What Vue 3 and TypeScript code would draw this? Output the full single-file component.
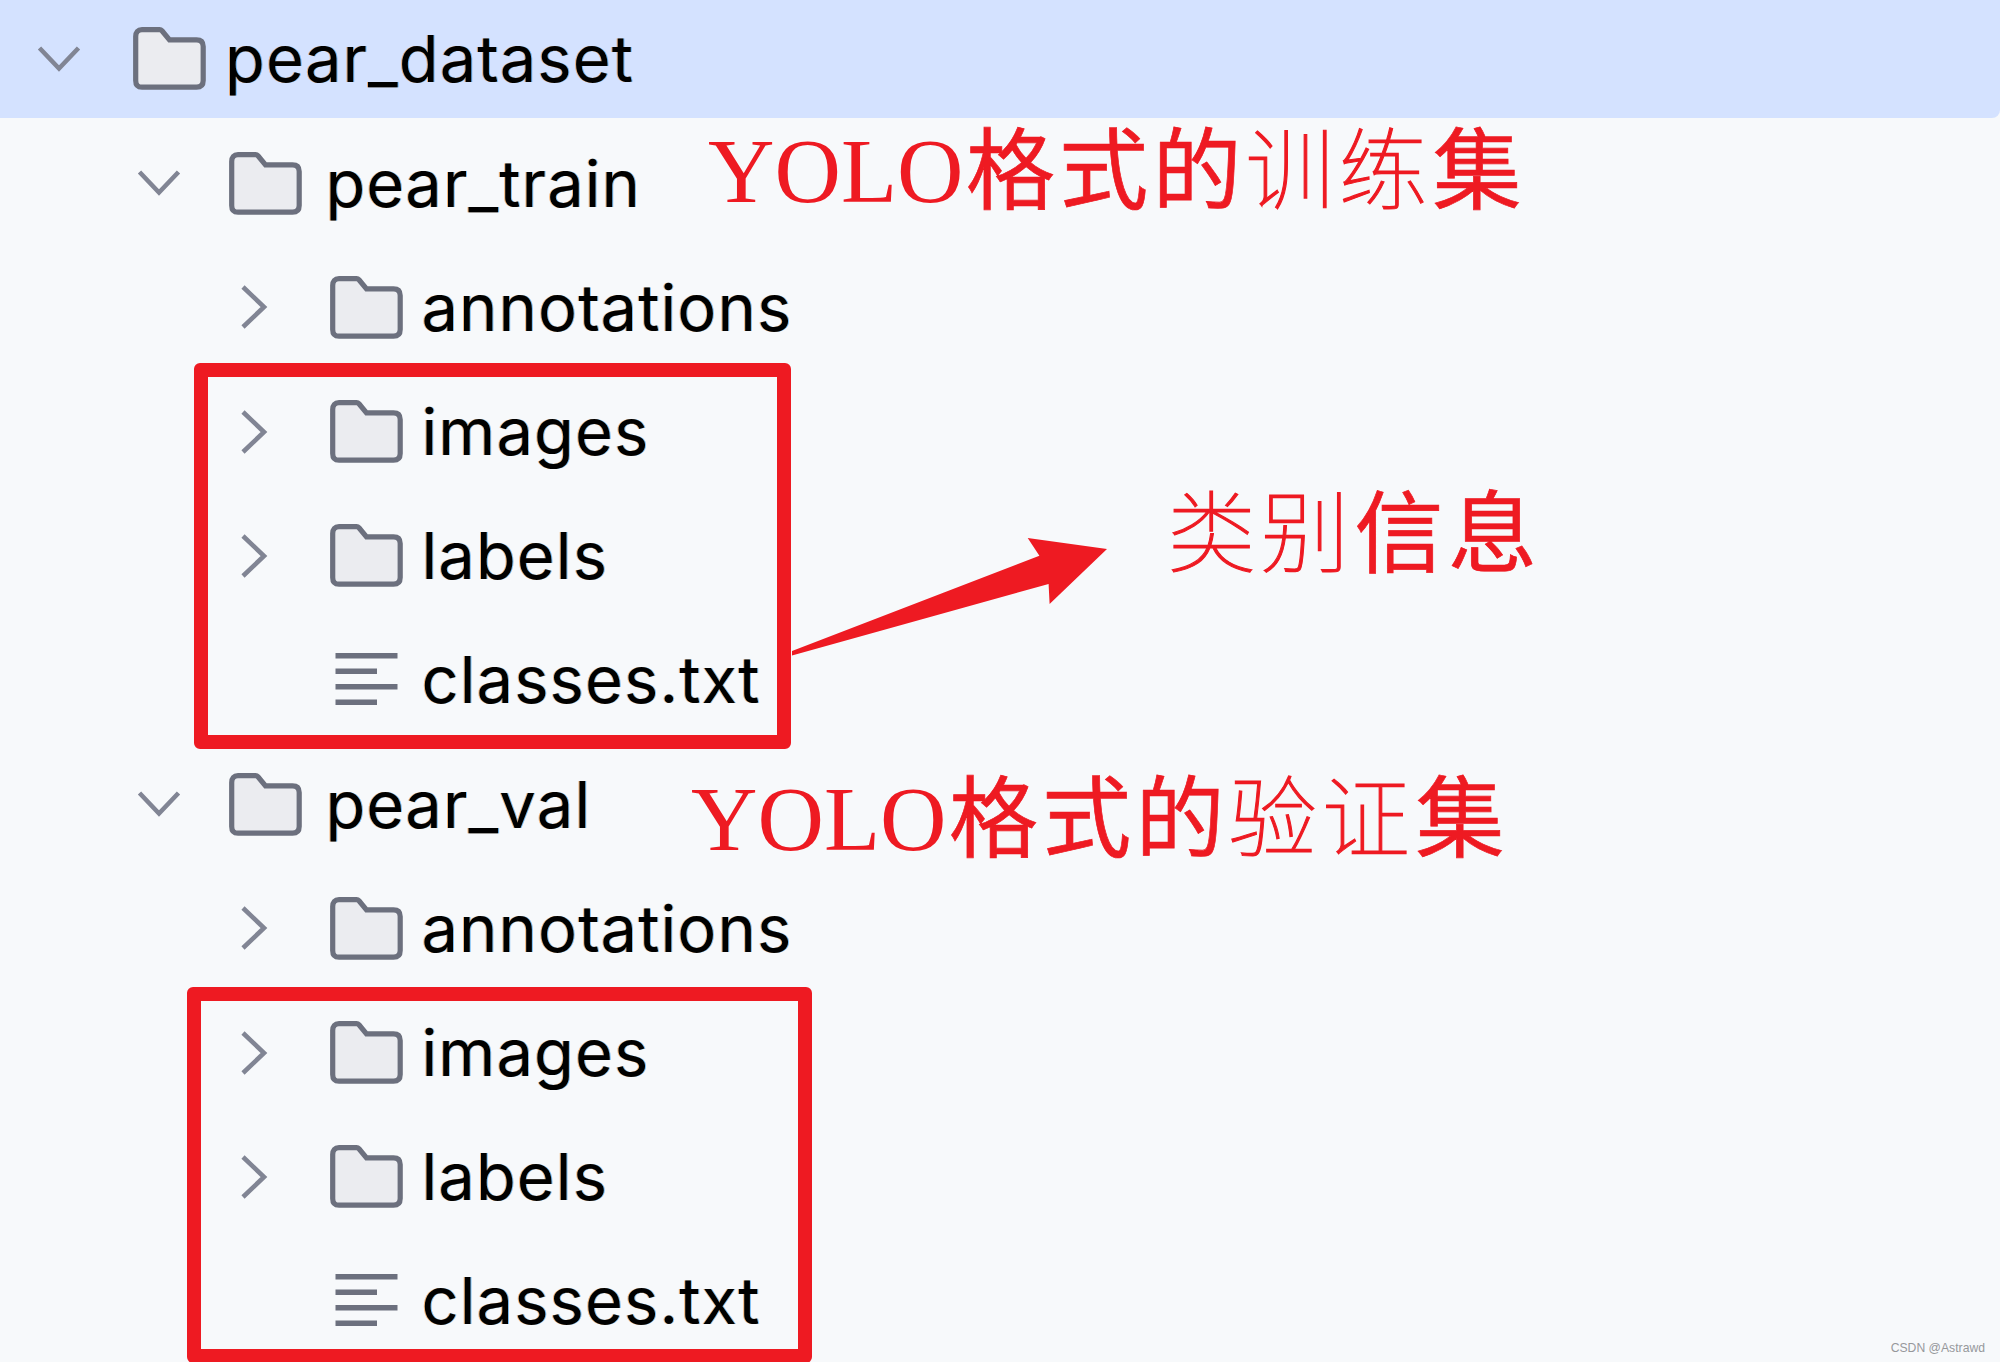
<script setup lang="ts">
interface TreeNode {
  name: string
  depth: number
  kind: 'folder' | 'file'
  open?: boolean
  selected?: boolean
}

const children = (): TreeNode[] => [
  { name: 'annotations', depth: 2, kind: 'folder' },
  { name: 'images', depth: 2, kind: 'folder' },
  { name: 'labels', depth: 2, kind: 'folder' },
  { name: 'classes.txt', depth: 2, kind: 'file' },
]

const nodes: TreeNode[] = [
  { name: 'pear_dataset', depth: 0, kind: 'folder', open: true, selected: true },
  { name: 'pear_train', depth: 1, kind: 'folder', open: true },
  ...children(),
  { name: 'pear_val', depth: 1, kind: 'folder', open: true },
  ...children(),
]
</script>

<template>
  <main class="panel">
    <div
      v-for="(node, i) in nodes"
      :key="i"
      class="row"
      :class="['depth-' + node.depth, { selected: node.selected }]"
    >
      <span class="toggle">
        <svg v-if="node.open" width="44" height="28" viewBox="0 0 44 28">
          <path d="M2.5 3 L22 23.5 L41.500 3" />
        </svg>
        <svg v-else-if="node.kind === 'folder'" class="closed" width="28" height="46" viewBox="0 0 28 46">
          <path d="M3 3 L24 23 L3 43" />
        </svg>
      </span>
      <svg v-if="node.kind === 'folder'" class="folder" width="73" height="63" viewBox="0 0 73 63">
        <path d="M9 2.700 H26.500 Q28 2.700 29 3.800 L36.500 12.800 H63.500 Q70.200 12.800 70.200 19.500 V53.500 Q70.200 60.200 63.500 60.200 H9 Q2.700 60.200 2.700 53.500 V9.500 Q2.700 2.700 9 2.700 Z" />
      </svg>
      <svg v-else class="file" width="73" height="63" viewBox="0 0 73 63">
        <path d="M5.500 7.800 H67.500 M5.500 23.300 H47 M5.500 38.800 H67.500 M5.500 54.300 H47" />
      </svg>
      <span class="name">{{ node.name }}</span>
    </div>

    <div class="frame frame-train"></div>
    <div class="frame frame-val"></div>
    <svg class="arrow" width="320" height="75" viewBox="0 0 320 75">
      <path d="M0 116 L247.400 20.700 L235.700 3 L315 14 L257.600 69 L256.600 49 L0 120.500 Z" />
    </svg>
    <p class="note note-train"><span class="latin">YOLO</span>格式的<span class="thin">训练</span>集</p>
    <p class="note note-class"><span class="thin">类别</span>信息</p>
    <p class="note note-val"><span class="latin">YOLO</span>格式的<span class="thin">验证</span>集</p>
    <span class="watermark">CSDN @Astrawd</span>
  </main>
</template>

<style>
body {
  margin: 0;
  background: #f7f9fb;
}
</style>

<style scoped>
.panel {
  position: relative;
  box-sizing: border-box;
  width: 2000px;
  height: 1362px;
  overflow: hidden;
  background: #f7f9fb;
  font-family: Inter, "Noto Sans", sans-serif;
}

.row {
  display: grid;
  align-items: center;
  height: 124.2px;
}

.selected {
  height: 117.5px;
  margin-bottom: 3.6px;
  background: #d4e2ff;
  border-bottom-right-radius: 8px;
}

.depth-0 { grid-template-columns: 133px 92px 1fr; }
.depth-1 { grid-template-columns: 229.4px 96px 1fr; }
.depth-2 { grid-template-columns: 329.5px 92px 1fr; }

.toggle {
  box-sizing: border-box;
  display: flex;
  padding-left: 37px;
}

.depth-1 .toggle { padding-left: 137px; }
.depth-2 .toggle { padding-left: 240px; }

svg {
  display: block;
  fill: none;
}

.toggle svg {
  stroke: #818594;
  stroke-width: 4.6;
}

.folder path {
  fill: #ebecf0;
  stroke: #6c707e;
  stroke-width: 5.2;
}

.file path {
  stroke: #6c707e;
  stroke-width: 5.6;
}

/* Offset shadows give the colour fringes of subpixel text rendering. */
.name {
  padding-top: 1px;
  font-size: 65px;
  line-height: 80px;
  letter-spacing: 1.1px;
  font-kerning: none;
  color: #000;
  text-shadow: -1px 0 rgba(240, 140, 40, 0.6), 1px 0 rgba(40, 150, 240, 0.6);
  white-space: pre;
}

.frame {
  position: absolute;
  box-sizing: border-box;
  border: 14px solid #ee1a22;
  border-radius: 6px;
}

.frame-train {
  left: 194px;
  top: 363px;
  width: 597px;
  height: 386px;
}

.frame-val {
  left: 187px;
  top: 987px;
  width: 625px;
  height: 376px;
}

.arrow {
  position: absolute;
  left: 792px;
  top: 535px;
  overflow: visible;
}

.arrow path {
  fill: #ee1a22;
}

.note {
  position: absolute;
  margin: 0;
  font-family: "Liberation Serif", "Noto Sans CJK SC", serif;
  font-size: 89px;
  line-height: 120px;
  letter-spacing: 4.3px;
  color: #ee1a22;
  white-space: nowrap;
  -webkit-text-stroke: 0.7px #ee1a22;
}

.latin {
  margin-right: 2.5px;
  font-size: 92px;
  line-height: 1;
  letter-spacing: 0;
  -webkit-text-stroke: 0;
}

.thin {
  position: relative;
  left: -1px;
  font-weight: 100;
  -webkit-text-stroke: 1.1px #ee1a22;
}

.note-train { left: 708px; top: 112px; }
.note-class { left: 1168px; top: 475px; }
.note-val { left: 691px; top: 760px; }

.watermark {
  position: absolute;
  right: 15px;
  top: 1340px;
  font: 12.2px/16px "Liberation Sans", sans-serif;
  color: #96989b;
}
</style>
